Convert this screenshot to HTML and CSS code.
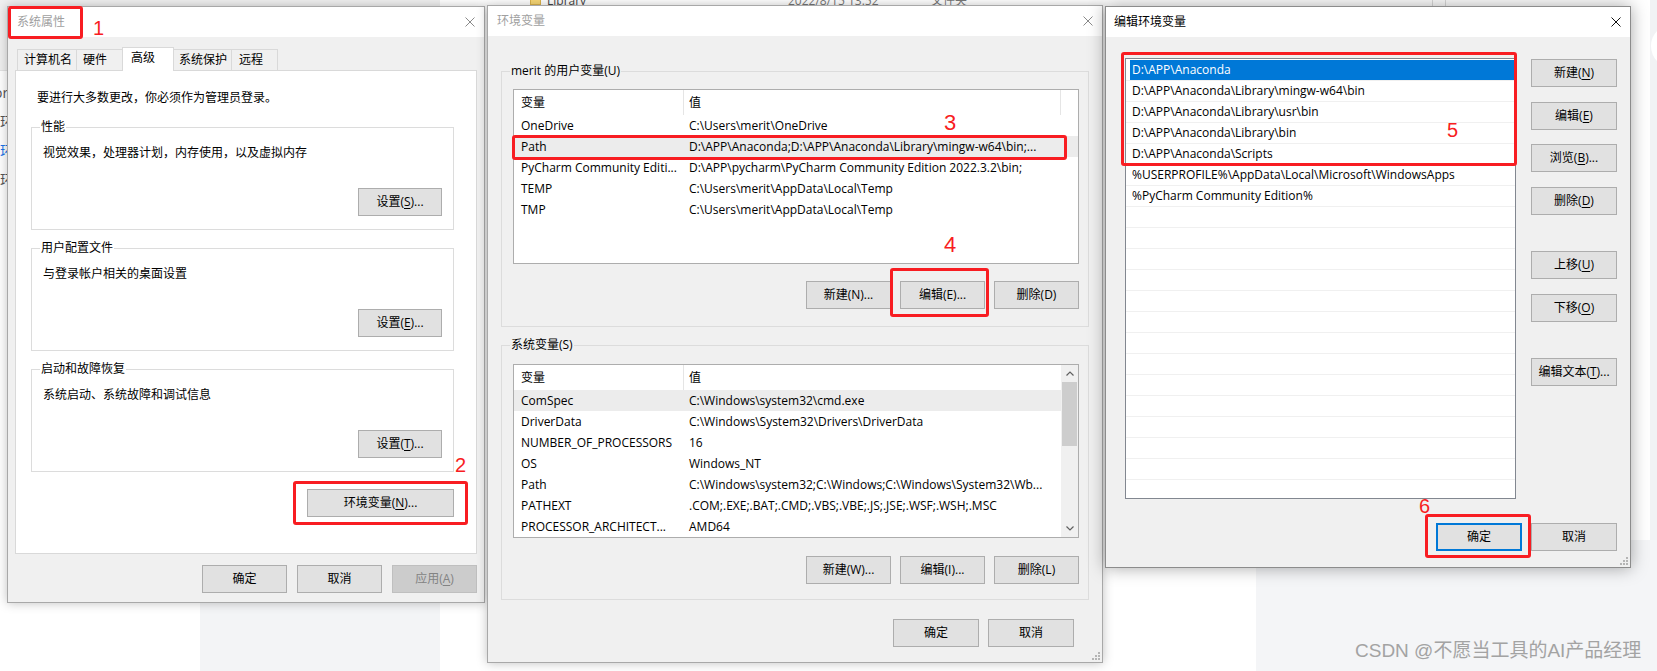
FILE: index.html
```html
<!DOCTYPE html>
<html lang="zh-CN">
<head>
    <meta charset="UTF-8">
    <title>环境变量</title>
    <link rel="stylesheet" href="styles.css">
</head>
<body>
<div class="desktop">
    <!-- 后面露出来的资源管理器 -->
    <div class="bg-top"></div>
    <div class="bg-left"></div>
    <div class="peek-left">
        <p class="cut">or</p>
        <p>环</p>
        <p class="link">环</p>
        <p>环</p>
    </div>
    <div class="folder"></div>
    <span class="peek-text peek-name">Library</span>
    <span class="peek-text peek-date">2022/8/15 13:52</span>
    <span class="peek-text peek-type">文件夹</span>
    <div class="peek-line peek-line-1"></div>
    <div class="peek-line peek-line-2"></div>
    <div class="bg-block bg-block-1"></div>
    <div class="bg-block bg-block-2"></div>
    <div class="bg-strip"><span class="bubble"></span></div>
    <div class="watermark">CSDN @不愿当工具的AI产品经理</div>

    <!-- 系统属性 -->
    <section class="window sys-props">
        <header class="titlebar">
            <span class="title">系统属性</span>
            <svg class="close" viewBox="0 0 10 10"><path d="M0.5 0.5L9.5 9.5M9.5 0.5L0.5 9.5"/></svg>
        </header>
        <div class="body">
            <div class="tabs">
                <div class="tab tab-name">计算机名</div>
                <div class="tab tab-hw">硬件</div>
                <div class="tab tab-adv active">高级</div>
                <div class="tab tab-protect">系统保护</div>
                <div class="tab tab-remote">远程</div>
            </div>
            <div class="tab-panel">
                <p class="intro">要进行大多数更改，你必须作为管理员登录。</p>
                <fieldset class="group first">
                    <legend>性能</legend>
                    <p>视觉效果，处理器计划，内存使用，以及虚拟内存</p>
                    <div class="group-actions"><button class="btn">设置(<u>S</u>)...</button></div>
                </fieldset>
                <fieldset class="group">
                    <legend>用户配置文件</legend>
                    <p>与登录帐户相关的桌面设置</p>
                    <div class="group-actions"><button class="btn">设置(<u>E</u>)...</button></div>
                </fieldset>
                <fieldset class="group">
                    <legend>启动和故障恢复</legend>
                    <p>系统启动、系统故障和调试信息</p>
                    <div class="group-actions"><button class="btn">设置(<u>T</u>)...</button></div>
                </fieldset>
                <div class="panel-actions">
                    <button class="btn btn-env">环境变量(<u>N</u>)...</button>
                </div>
            </div>
            <div class="footer">
                <button class="btn">确定</button>
                <button class="btn">取消</button>
                <button class="btn disabled">应用(<u>A</u>)</button>
            </div>
        </div>
    </section>

    <!-- 环境变量 -->
    <section class="window env-vars">
        <header class="titlebar">
            <span class="title">环境变量</span>
            <svg class="close" viewBox="0 0 10 10"><path d="M0.5 0.5L9.5 9.5M9.5 0.5L0.5 9.5"/></svg>
        </header>
        <div class="body">
            <fieldset class="group env-group user">
                <legend>merit 的用户变量(U)</legend>
                <div class="list">
                    <div class="list-head three"><span>变量</span><span>值</span><span></span></div>
                    <div class="row"><span>OneDrive</span><span>C:\Users\merit\OneDrive</span></div>
                    <div class="row hl"><span>Path</span><span>D:\APP\Anaconda;D:\APP\Anaconda\Library\mingw-w64\bin;...</span></div>
                    <div class="row"><span>PyCharm Community Editi...</span><span>D:\APP\pycharm\PyCharm Community Edition 2022.3.2\bin;</span></div>
                    <div class="row"><span>TEMP</span><span>C:\Users\merit\AppData\Local\Temp</span></div>
                    <div class="row"><span>TMP</span><span>C:\Users\merit\AppData\Local\Temp</span></div>
                </div>
                <div class="list-actions">
                    <button class="btn">新建(N)...</button>
                    <button class="btn">编辑(E)...</button>
                    <button class="btn">删除(D)</button>
                </div>
            </fieldset>
            <fieldset class="group env-group system">
                <legend>系统变量(S)</legend>
                <div class="list">
                    <div class="list-main">
                        <div class="list-head"><span>变量</span><span>值</span></div>
                        <div class="row hl"><span>ComSpec</span><span>C:\Windows\system32\cmd.exe</span></div>
                        <div class="row"><span>DriverData</span><span>C:\Windows\System32\Drivers\DriverData</span></div>
                        <div class="row"><span>NUMBER_OF_PROCESSORS</span><span>16</span></div>
                        <div class="row"><span>OS</span><span>Windows_NT</span></div>
                        <div class="row"><span>Path</span><span>C:\Windows\system32;C:\Windows;C:\Windows\System32\Wb...</span></div>
                        <div class="row"><span>PATHEXT</span><span>.COM;.EXE;.BAT;.CMD;.VBS;.VBE;.JS;.JSE;.WSF;.WSH;.MSC</span></div>
                        <div class="row"><span>PROCESSOR_ARCHITECT...</span><span>AMD64</span></div>
                    </div>
                    <div class="scrollbar">
                        <span class="scroll-arrow"><svg viewBox="0 0 8 5"><path d="M0.5 4.5L4 1L7.5 4.5"/></svg></span>
                        <span class="scroll-thumb"></span>
                        <span class="scroll-track"></span>
                        <span class="scroll-arrow"><svg viewBox="0 0 8 5"><path d="M0.5 0.5L4 4L7.5 0.5"/></svg></span>
                    </div>
                </div>
                <div class="list-actions">
                    <button class="btn">新建(W)...</button>
                    <button class="btn">编辑(I)...</button>
                    <button class="btn">删除(L)</button>
                </div>
            </fieldset>
            <div class="footer">
                <button class="btn">确定</button>
                <button class="btn">取消</button>
            </div>
            <svg class="grip" viewBox="0 0 8 8"><path d="M6 0h2v2H6zM3 3h2v2H3zM6 3h2v2H6zM0 6h2v2H0zM3 6h2v2H3zM6 6h2v2H6z"/></svg>
        </div>
    </section>

    <!-- 编辑环境变量 -->
    <section class="window edit-env">
        <header class="titlebar">
            <span class="title">编辑环境变量</span>
            <svg class="close" viewBox="0 0 10 10"><path d="M0.5 0.5L9.5 9.5M9.5 0.5L0.5 9.5"/></svg>
        </header>
        <div class="body">
            <div class="edit-main">
                <div class="path-list">
                    <div class="path-row selected"><span>D:\APP\Anaconda</span></div>
                    <div class="path-row"><span>D:\APP\Anaconda\Library\mingw-w64\bin</span></div>
                    <div class="path-row"><span>D:\APP\Anaconda\Library\usr\bin</span></div>
                    <div class="path-row"><span>D:\APP\Anaconda\Library\bin</span></div>
                    <div class="path-row"><span>D:\APP\Anaconda\Scripts</span></div>
                    <div class="path-row"><span>%USERPROFILE%\AppData\Local\Microsoft\WindowsApps</span></div>
                    <div class="path-row"><span>%PyCharm Community Edition%</span></div>
                    <div class="path-row"><span></span></div>
                    <div class="path-row"><span></span></div>
                    <div class="path-row"><span></span></div>
                    <div class="path-row"><span></span></div>
                    <div class="path-row"><span></span></div>
                    <div class="path-row"><span></span></div>
                    <div class="path-row"><span></span></div>
                    <div class="path-row"><span></span></div>
                    <div class="path-row"><span></span></div>
                    <div class="path-row"><span></span></div>
                    <div class="path-row"><span></span></div>
                    <div class="path-row"><span></span></div>
                    <div class="path-row"><span></span></div>
                    <div class="path-row"><span></span></div>
                </div>
                <div class="side-btns">
                    <button class="btn">新建(<u>N</u>)</button>
                    <button class="btn">编辑(<u>E</u>)</button>
                    <button class="btn">浏览(<u>B</u>)...</button>
                    <button class="btn">删除(<u>D</u>)</button>
                    <button class="btn gap-before">上移(<u>U</u>)</button>
                    <button class="btn">下移(<u>O</u>)</button>
                    <button class="btn gap-before">编辑文本(<u>T</u>)...</button>
                </div>
            </div>
            <div class="footer">
                <button class="btn default">确定</button>
                <button class="btn">取消</button>
            </div>
            <svg class="grip" viewBox="0 0 8 8"><path d="M6 0h2v2H6zM3 3h2v2H3zM6 3h2v2H6zM0 6h2v2H0zM3 6h2v2H3zM6 6h2v2H6z"/></svg>
        </div>
    </section>

    <!-- 红色标注 -->
    <div class="mark mark-1"></div>
    <div class="mark mark-2"></div>
    <div class="mark mark-3"></div>
    <div class="mark mark-4"></div>
    <div class="mark mark-5"></div>
    <div class="mark mark-6"></div>
    <span class="num num-1">1</span>
    <span class="num num-2">2</span>
    <span class="num num-3 big">3</span>
    <span class="num num-4 big">4</span>
    <span class="num num-5">5</span>
    <span class="num num-6">6</span>
</div>
</body>
</html>
```

FILE: styles.css
```css
* {
    margin: 0;
    padding: 0;
    box-sizing: border-box;
}

body {
    font: 12px/16px "Open Sans", "Noto Sans CJK SC", sans-serif;
    color: #000;
    background: #fff;
}

.desktop {
    position: relative;
    width: 1657px;
    height: 671px;
    overflow: hidden;
    background: #fff;
}

/* ---------- 背景 ---------- */
.bg-top {
    position: absolute;
    left: 0;
    top: 0;
    width: 440px;
    height: 6px;
    background: #f0f0f0;
}

.bg-left {
    position: absolute;
    left: 0;
    top: 0;
    width: 7px;
    height: 71px;
    background: #f0f0f0;
    border-bottom: 1px solid #e3e3e3;
}

.peek-left {
    position: absolute;
    left: 0;
    top: 71px;
    width: 7px;
    padding-top: 7px;
    overflow: hidden;
    white-space: nowrap;
    font-size: 14px;
    line-height: 29px;
    color: #555;
}

.peek-left .cut {
    margin-left: -6px;
}

.peek-left .link {
    color: #1a73e8;
}

.folder {
    position: absolute;
    left: 530px;
    top: -4px;
    width: 11px;
    height: 9px;
    background: #f8d775;
    border: 1px solid #dcb44c;
}

.peek-text {
    position: absolute;
    top: -7px;
    color: #444;
}

.peek-name { left: 547px; }
.peek-date { left: 788px; color: #777; }
.peek-type { left: 931px; color: #777; }

.peek-line {
    position: absolute;
    top: 0;
    width: 1px;
    height: 6px;
    background: #dcdcdc;
}

.peek-line-1 { left: 1432px; }
.peek-line-2 { left: 1445px; }

.bg-block {
    position: absolute;
    background: #f3f4f6;
}

.bg-block-1 {
    left: 200px;
    top: 560px;
    width: 240px;
    height: 111px;
}

.bg-block-2 {
    left: 1256px;
    top: 540px;
    width: 401px;
    height: 131px;
    background: #f4f5f7;
}

.bg-strip {
    position: absolute;
    left: 1650px;
    top: 0;
    width: 7px;
    height: 540px;
    background: #f1f2f4;
    overflow: hidden;
}

.bubble {
    position: absolute;
    left: 1px;
    top: 24px;
    width: 44px;
    height: 44px;
    border-radius: 50%;
    background: #fff;
}

.watermark {
    position: absolute;
    left: 1355px;
    top: 641px;
    z-index: 5;
    font: 19px/20px "Liberation Sans", "Noto Sans CJK SC", sans-serif;
    color: #a3a3a3;
}

/* ---------- 窗口 ---------- */
.window {
    position: absolute;
    display: flex;
    flex-direction: column;
    background: #f0f0f0;
    border: 1px solid #a8a8a8;
    box-shadow: 0 0 10px rgba(0, 0, 0, 0.25);
}

.sys-props {
    left: 7px;
    top: 6px;
    width: 478px;
    height: 597px;
    z-index: 1;
}

.env-vars {
    left: 487px;
    top: 5px;
    width: 616px;
    height: 658px;
    z-index: 2;
}

.edit-env {
    left: 1105px;
    top: 6px;
    width: 526px;
    height: 562px;
    z-index: 3;
    border-color: #8c8c8c;
    box-shadow: 0 0 16px rgba(0, 0, 0, 0.35);
}

.titlebar {
    display: flex;
    align-items: center;
    flex-shrink: 0;
    height: 30px;
    padding-left: 9px;
    background: #fff;
    color: #a0a0a0;
}

.edit-env .titlebar {
    color: #000;
    padding-left: 8px;
}

.close {
    width: 10px;
    height: 10px;
    margin-left: auto;
    margin-right: 9px;
    fill: none;
    stroke: #8a8a8a;
    stroke-width: 1;
}

.edit-env .close {
    stroke: #111;
}

.body {
    position: relative;
    flex: 1;
}

.sys-props .body { padding: 10px 7px 9px; }
.env-vars .body { padding: 27px 13px 15px; }
.edit-env .body { padding: 21px 13px 16px 19px; }

.btn {
    display: flex;
    align-items: center;
    justify-content: center;
    height: 28px;
    background: #e1e1e1;
    border: 1px solid #adadad;
    font: inherit;
    color: #000;
}

.btn u {
    text-underline-offset: 2px;
}

.btn.disabled {
    background: #cccccc;
    border-color: #bfbfbf;
    color: #838383;
}

.btn.default {
    border: 2px solid #0078d7;
}

.footer {
    display: flex;
    justify-content: flex-end;
}

.grip {
    position: absolute;
    right: 2px;
    bottom: 2px;
    width: 8px;
    height: 8px;
    fill: #b5b5b5;
}

/* ---------- 系统属性 ---------- */
.tabs {
    position: relative;
    z-index: 1;
    display: flex;
    align-items: flex-end;
    height: 23px;
    margin-left: 2px;
}

.tab {
    height: 21px;
    padding-left: 6px;
    line-height: 20px;
    background: #f0f0f0;
    border-top: 1px solid #d9d9d9;
    border-right: 1px solid #d9d9d9;
    white-space: nowrap;
}

.tab:first-child {
    border-left: 1px solid #d9d9d9;
}

.tab-name { width: 60px; }
.tab-hw { width: 46px; }
.tab-protect { width: 58px; padding-left: 5px; }
.tab-remote { width: 46px; padding-left: 7px; }

.tab.active {
    width: 52px;
    height: 24px;
    margin-left: -1px;
    margin-bottom: -1px;
    padding-left: 8px;
    background: #fff;
    border-left: 1px solid #d9d9d9;
}

.tab-panel {
    height: 484px;
    padding: 19px 22px 0 15px;
    background: #fff;
    border: 1px solid #d9d9d9;
}

.intro {
    padding-left: 6px;
}

.group {
    min-width: 0;
    margin-top: 10px;
    border: 1px solid #dcdcdc;
}

.group legend {
    margin-left: -3px;
    padding: 0 1px;
    line-height: 16px;
}

.sys-props .group {
    padding: 0 11px 13px;
}

.sys-props .group.first {
    margin-top: 13px;
}

.group p {
    margin-top: 10px;
}

.group-actions {
    display: flex;
    justify-content: flex-end;
    margin-top: 27px;
}

.group-actions .btn {
    width: 84px;
}

.panel-actions {
    display: flex;
    justify-content: flex-end;
    margin-top: 17px;
}

.btn-env {
    width: 147px;
}

.sys-props .footer {
    gap: 10px;
    margin-top: 11px;
}

.sys-props .footer .btn {
    width: 85px;
}

/* ---------- 环境变量 ---------- */
.env-group {
    padding: 0 9px 17px 11px;
}

.env-vars .group.user {
    margin-top: 0;
}

.env-group.system {
    padding-bottom: 15px;
}

.list {
    overflow: hidden;
    background: #fff;
    border: 1px solid #adadad;
}

.user .list {
    height: 175px;
    margin-top: 10px;
}

.system .list {
    display: flex;
    height: 174px;
    margin-top: 11px;
}

.list-main {
    flex: 1;
    min-width: 0;
}

.list-head {
    display: grid;
    grid-template-columns: 170px 1fr;
    height: 25px;
    line-height: 25px;
}

.list-head.three {
    grid-template-columns: 170px 377px 1fr;
}

.list-head span {
    padding-left: 7px;
    border-right: 1px solid #e5e5e5;
}

.list-head span + span {
    padding-left: 5px;
}

.list-head span:last-child {
    border-right: none;
}

.row {
    display: grid;
    grid-template-columns: 170px 1fr;
    height: 21px;
    line-height: 21px;
    white-space: nowrap;
}

.row span {
    overflow: hidden;
    padding-left: 7px;
}

.row span + span {
    padding-left: 5px;
}

.row.hl {
    background: #ececec;
}

.scrollbar {
    display: flex;
    flex-direction: column;
    width: 17px;
    background: #f0f0f0;
}

.scroll-arrow {
    display: flex;
    align-items: center;
    justify-content: center;
    height: 17px;
}

.scroll-arrow svg {
    width: 8px;
    height: 5px;
    fill: none;
    stroke: #606060;
    stroke-width: 1.2;
}

.scroll-thumb {
    height: 64px;
    margin: 0 1px;
    background: #cdcdcd;
}

.scroll-track {
    flex: 1;
}

.list-actions {
    display: flex;
    justify-content: flex-end;
    gap: 9px;
    margin-top: 17px;
}

.system .list-actions {
    margin-top: 18px;
}

.list-actions .btn {
    width: 85px;
}

.env-vars .footer {
    gap: 9px;
    margin-top: 19px;
    padding-right: 15px;
}

.env-vars .footer .btn {
    width: 86px;
}

/* ---------- 编辑环境变量 ---------- */
.edit-main {
    display: flex;
    gap: 15px;
}

.path-list {
    width: 391px;
    height: 441px;
    padding-top: 1px;
    overflow: hidden;
    background: #fff;
    border: 1px solid #828790;
}

.path-row {
    height: 21px;
    padding: 0 1px 0 4px;
    border-bottom: 1px solid #f0f0f0;
}

.path-row span {
    display: block;
    height: 20px;
    padding-left: 2px;
    line-height: 20px;
    white-space: nowrap;
}

.path-row.selected span {
    background: #0078d7;
    color: #fff;
}

.side-btns {
    display: flex;
    flex-direction: column;
    gap: 14.5px;
    width: 86px;
    padding-top: 1px;
}

.side-btns .gap-before {
    margin-top: 22px;
}

.edit-env .footer {
    gap: 9px;
    margin-top: 24px;
}

.edit-env .footer .btn {
    width: 86px;
}

/* ---------- 红色标注 ---------- */
.mark {
    position: absolute;
    z-index: 10;
    border: 3px solid #f81d22;
    border-radius: 3px;
}

.mark-1 { left: 8px; top: 6px; width: 75px; height: 33px; }
.mark-2 { left: 293px; top: 481px; width: 175px; height: 44px; }
.mark-3 { left: 512px; top: 135px; width: 555px; height: 25px; }
.mark-4 { left: 890px; top: 268px; width: 99px; height: 49px; }
.mark-5 { left: 1121px; top: 52px; width: 396px; height: 114px; }
.mark-6 { left: 1425px; top: 514px; width: 106px; height: 44px; }

.num {
    position: absolute;
    z-index: 10;
    color: #f81d22;
    font: 20px/20px "Liberation Sans", Arial, sans-serif;
}

.num.big {
    font-size: 22px;
    line-height: 22px;
}

.num-1 { left: 93px; top: 18px; }
.num-2 { left: 455px; top: 455px; }
.num-3 { left: 944px; top: 112px; }
.num-4 { left: 944px; top: 234px; }
.num-5 { left: 1447px; top: 120px; }
.num-6 { left: 1419px; top: 496px; }
```
